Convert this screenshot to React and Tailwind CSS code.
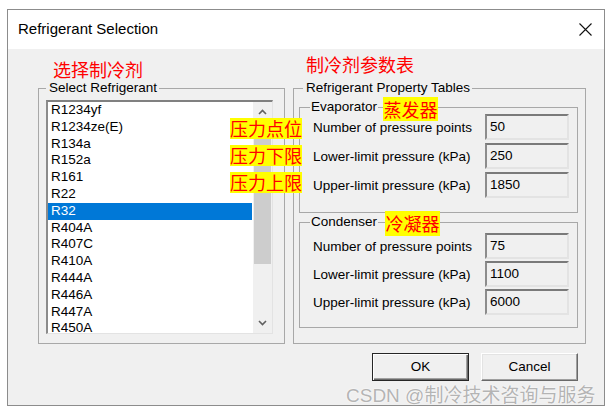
import React from 'react';

const REFRIGERANTS = [
  'R1234yf', 'R1234ze(E)', 'R134a', 'R152a', 'R161', 'R22', 'R32',
  'R404A', 'R407C', 'R410A', 'R444A', 'R446A', 'R447A', 'R450A',
];

const EVAPORATOR = [
  { label: 'Number of pressure points', value: '50' },
  { label: 'Lower-limit pressure (kPa)', value: '250' },
  { label: 'Upper-limit pressure (kPa)', value: '1850' },
];

const CONDENSER = [
  { label: 'Number of pressure points', value: '75' },
  { label: 'Lower-limit pressure (kPa)', value: '1100' },
  { label: 'Upper-limit pressure (kPa)', value: '6000' },
];

const NOTES = ['压力点位', '压力下限', '压力上限'];

function Chevron({ up }) {
  return (
    <svg width="9" height="6" viewBox="0 0 9 6" fill="none">
      <path
        d={up ? 'M1 5 L4.5 1.5 L8 5' : 'M1 1 L4.5 4.5 L8 1'}
        stroke="#606060"
        strokeWidth="1.6"
      />
    </svg>
  );
}

function Field({ label, value }) {
  return (
    <div className="flex items-center h-[26px]">
      <span className="flex-1 pt-[2px]">{label}</span>
      <div className="w-[84px] h-full bg-[#f0f0f0] border-2 border-t-[#7a7a7a] border-l-[#8c8c8c] border-r-[#e3e3e3] border-b-[#e3e3e3] pl-[3px] leading-[22px]">
        {value}
      </div>
    </div>
  );
}

function Note({ children, className }) {
  return (
    <span
      className={`bg-[#ffff00] text-[#ff0000] font-['Noto_Sans_CJK_SC',sans-serif] text-[18px] text-center whitespace-nowrap ${className}`}
    >
      {children}
    </span>
  );
}

export default function App() {
  return (
    <div className="relative w-[612px] h-[417px] bg-white overflow-hidden pt-[9px] pl-[7px] font-['Liberation_Sans',Arial,sans-serif] text-[13.5px] text-black">
      <div className="w-[598px] h-[397px] border border-[#8c8c8c] flex flex-col">
        {/* title bar */}
        <div className="h-[39px] bg-white flex items-center justify-between pl-[10px] pr-[12px]">
          <span className="text-[15px]">Refrigerant Selection</span>
          <svg width="13" height="13" viewBox="0 0 13 13">
            <path d="M0.5 0.5 L12.5 12.5 M12.5 0.5 L0.5 12.5" stroke="#111" strokeWidth="1.1" />
          </svg>
        </div>

        <div className="flex-1 bg-[#f0f0f0] pl-[30px] pr-[18px]">
          <div className="flex gap-[8px]">
            {/* left column */}
            <div className="w-[247px]">
              <div className="h-[31px] pt-[11px] pl-[15px]">
                <div className="text-[#ff0000] font-['Noto_Sans_CJK_SC',sans-serif] text-[18px] leading-[18px]">选择制冷剂</div>
              </div>
              <fieldset className="h-[264px] border border-[#a8a8a8] px-[7px]">
                <legend className="pl-[3px] pr-[2px] leading-[16px]">Select Refrigerant</legend>
                <div className="mt-[4px] h-[234px] w-[227px] flex bg-white border-2 border-r border-b border-t-[#808080] border-l-[#8c8c8c] border-r-[#e3e3e3] border-b-[#e3e3e3]">
                  <div className="w-[204px] overflow-hidden">
                    {REFRIGERANTS.map((r) => (
                      <div
                        key={r}
                        className={`h-[16.8px] leading-[16.8px] pl-[3px] ${r === 'R32' ? 'bg-[#0078d7] text-white' : ''}`}
                      >
                        {r}
                      </div>
                    ))}
                  </div>
                  <div className="w-[19px] ml-auto bg-[#f0f0f0] flex flex-col">
                    <div className="h-[20px] flex items-center justify-center">
                      <Chevron up />
                    </div>
                    <div className="flex-1 px-[1px]">
                      <div className="h-[142px] bg-[#cdcdcd]" />
                    </div>
                    <div className="h-[20px] flex items-center justify-center">
                      <Chevron />
                    </div>
                  </div>
                </div>
              </fieldset>
            </div>

            {/* right column */}
            <div className="w-[293px]">
              <div className="h-[31px] pt-[6px] pl-[13px]">
                <div className="text-[#ff0000] font-['Noto_Sans_CJK_SC',sans-serif] text-[18px] leading-[18px]">制冷剂参数表</div>
              </div>
              <fieldset className="h-[264px] border border-[#a8a8a8] px-[5px]">
                <legend className="ml-[4px] pl-[3px] pr-[2px] leading-[16px]">Refrigerant Property Tables</legend>

                <fieldset className="mt-[3px] w-[279px] h-[114px] border border-[#a8a8a8] pl-[10px] pr-[8px]">
                  <legend className="px-[1px] leading-[16px]">Evaporator</legend>
                  <div className="mt-[-1px] pl-[3px] flex flex-col gap-[3px]">
                    {EVAPORATOR.map((f) => (
                      <Field key={f.label} {...f} />
                    ))}
                  </div>
                </fieldset>

                <fieldset className="mt-[1px] w-[279px] h-[114px] border border-[#a8a8a8] pl-[10px] pr-[8px]">
                  <legend className="px-[1px] leading-[16px]">Condenser</legend>
                  <div className="mt-[3px] pl-[3px] flex flex-col gap-[2px]">
                    {CONDENSER.map((f) => (
                      <Field key={f.label} {...f} />
                    ))}
                  </div>
                </fieldset>
              </fieldset>
            </div>
          </div>

          {/* buttons */}
          <div className="mt-[9px] pr-[8px] flex justify-end gap-[12px]">
            <button className="w-[97px] h-[28px] bg-[#f0f0f0] border border-[#262626] shadow-[inset_1px_1px_0_#fff,inset_-1px_-1px_0_#696969,inset_-2px_-2px_0_#a0a0a0]">
              OK
            </button>
            <button className="w-[97px] h-[28px] bg-[#f0f0f0] border border-t-white border-l-white border-r-[#696969] border-b-[#696969] shadow-[inset_-1px_-1px_0_#a0a0a0,inset_1px_1px_0_#e3e3e3]">
              Cancel
            </button>
          </div>
        </div>
      </div>

      {/* annotations pasted over the dialog */}
      <div className="absolute left-[230px] top-[118px] flex flex-col gap-[6px]">
        {NOTES.map((n) => (
          <Note key={n} className="block w-[72px] h-[21px] leading-[21px]">{n}</Note>
        ))}
      </div>
      <Note className="absolute left-[383px] top-[97px] w-[55px] h-[24px] leading-[24px]">蒸发器</Note>
      <Note className="absolute left-[385px] top-[211px] w-[55px] h-[25px] leading-[25px]">冷凝器</Note>
      <div className="absolute left-[346px] top-[385px] text-[19px] leading-[22px] text-[#b4b4b4] font-['Liberation_Sans','Noto_Sans_CJK_SC',sans-serif] [text-shadow:0_0_2px_#fff,0_0_1px_#fff]">
        CSDN @制冷技术咨询与服务
      </div>
    </div>
  );
}
